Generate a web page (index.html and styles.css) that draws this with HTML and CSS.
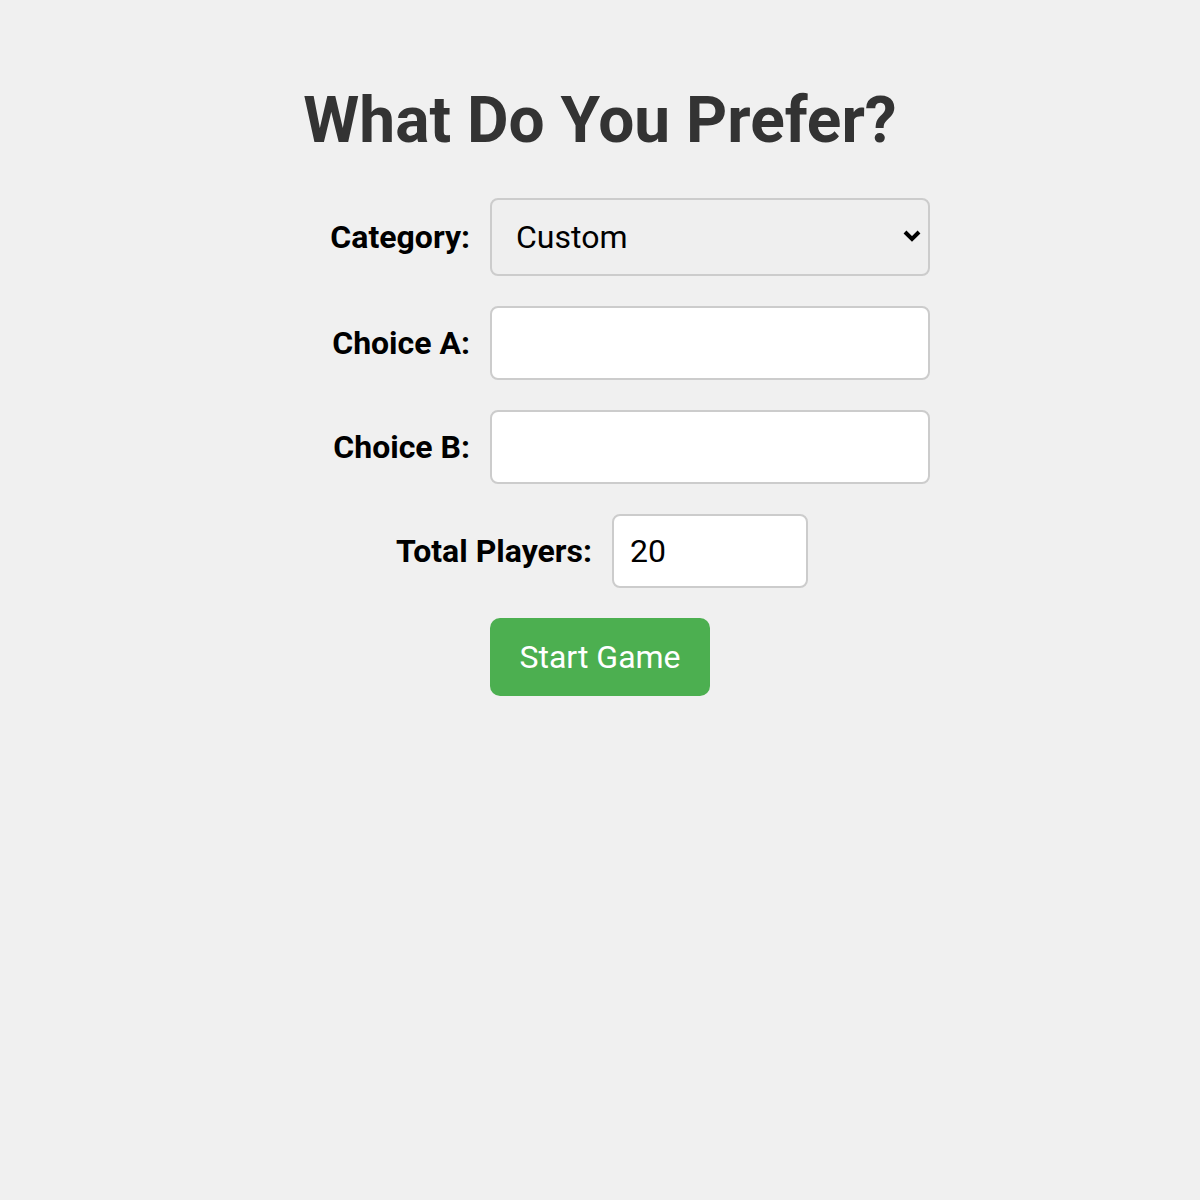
FILE: index.html
```html
<!DOCTYPE html>
<html lang="en">
<head>
    <meta charset="UTF-8">
    <meta name="viewport" content="width=device-width, initial-scale=1.0">
    <title>What Do You Prefer?</title>
    <link rel="stylesheet" href="styles.css">
</head>
<body>

    <div class="container">
        <h1>What Do You Prefer?</h1>

        <form id="setupForm">
            <div class="form-row">
                <label for="category">Category:</label>
                <div class="select-wrap">
                    <select id="category">
                        <option value="custom" selected>Custom</option>
                        <option value="food">Food</option>
                        <option value="movies">Movies</option>
                        <option value="travel">Travel</option>
                    </select>
                    <svg class="chevron" width="18" height="12" viewBox="0 0 18 12">
                        <path d="M2 2 L9 9 L16 2" fill="none" stroke="#000" stroke-width="4"/>
                    </svg>
                </div>
            </div>

            <div class="form-row">
                <label for="choiceA">Choice A:</label>
                <input type="text" id="choiceA" class="wide">
            </div>

            <div class="form-row">
                <label for="choiceB">Choice B:</label>
                <input type="text" id="choiceB" class="wide">
            </div>

            <div class="form-row">
                <label for="totalPlayers">Total Players:</label>
                <input type="number" id="totalPlayers" class="narrow" value="20">
            </div>

            <div class="form-row">
                <button type="button" onclick="startGame()">Start Game</button>
            </div>
        </form>
    </div>

    <script>
        function startGame() {
            var a = document.getElementById('choiceA').value;
            var b = document.getElementById('choiceB').value;
            // nothing to play yet without both choices
            if (!a || !b) {
                return;
            }
        }
    </script>

</body>
</html>
```

FILE: styles.css
```css
body {
    font-family: 'Roboto', 'Liberation Sans', sans-serif;
    margin: 0;
    background-color: #f0f0f0;
    color: #000;
}

.container {
    padding-top: 83px;
    text-align: center;
}

h1 {
    font-size: 64px;
    font-weight: 700;
    color: #333;
    margin: 0 0 40px 0;
}

.form-row {
    display: flex;
    justify-content: center;
    align-items: center;
    margin-bottom: 30px;
}

label {
    width: 200px;
    margin-right: 20px;
    text-align: right;
    font-size: 32px;
    font-weight: 700;
}

.select-wrap {
    position: relative;
}

select {
    appearance: none;
    -webkit-appearance: none;
    width: 440px;
    height: 78px;
    padding: 0 24px;
    font-family: inherit;
    font-size: 32px;
    color: #000;
    background-color: #efefef;
    border: 2px solid #ccc;
    border-radius: 8px;
    box-sizing: border-box;
}

.chevron {
    position: absolute;
    right: 9px;
    top: 32px;
    pointer-events: none;
}

input {
    height: 74px;
    padding: 0 16px;
    font-family: inherit;
    font-size: 32px;
    color: #000;
    background-color: #fff;
    border: 2px solid #ccc;
    border-radius: 8px;
    box-sizing: border-box;
}

input.wide {
    width: 440px;
}

input.narrow {
    width: 196px;
    -moz-appearance: textfield;
}

input.narrow::-webkit-inner-spin-button,
input.narrow::-webkit-outer-spin-button {
    -webkit-appearance: none;
    margin: 0;
}

button {
    width: 220px;
    height: 78px;
    font-family: inherit;
    font-size: 32px;
    background-color: #4CAF50;
    color: white;
    border: none;
    border-radius: 10px;
    cursor: pointer;
}

button:hover {
    background-color: #45a049;
}
```
